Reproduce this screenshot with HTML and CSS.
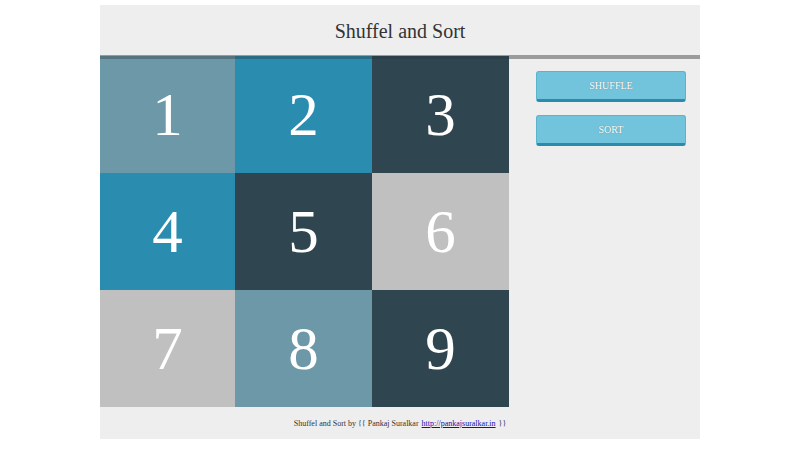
FILE: index.html
```html
<!DOCTYPE html>
<html>
<head>
<meta charset="utf-8">
<link rel="stylesheet" href="styles.css">
</head>
<body>
<div class="app">
  <header class="header">Shuffel and Sort</header>
  <main class="main">
    <div class="grid">
      <div class="cell c-slate">1</div>
      <div class="cell c-teal">2</div>
      <div class="cell c-dark">3</div>
      <div class="cell c-teal">4</div>
      <div class="cell c-dark">5</div>
      <div class="cell c-gray">6</div>
      <div class="cell c-gray">7</div>
      <div class="cell c-slate">8</div>
      <div class="cell c-dark">9</div>
    </div>
    <div class="panel">
      <button class="btn">SHUFFLE</button>
      <button class="btn">SORT</button>
    </div>
  </main>
  <footer class="footer">Shuffel and Sort by {{ Pankaj Suralkar <a href="#">http://pankajsuralkar.in</a> }}</footer>
</div>
</body>
</html>
```
FILE: styles.css
```css
html, body {
  margin: 0;
  padding: 0;
  background: #ffffff;
  font-family: "Liberation Serif", "Times New Roman", serif;
}
.app {
  width: 600px;
  margin: 5px auto 0;
  background: #eeeeee;
}
.header {
  height: 50px;
  display: flex;
  align-items: center;
  justify-content: center;
  font-size: 20px;
  color: #333333;
  padding-top: 2px;
  box-sizing: border-box;
}
.main {
  display: flex;
  border-top: 4px solid #9b9b9b;
}
.grid {
  width: 409px;
  margin-top: -3px;
  display: grid;
  grid-template-columns: 135px 137px 137px;
  grid-template-rows: repeat(3, 117px);
}
.cell {
  display: flex;
  align-items: center;
  justify-content: center;
  color: #ffffff;
  font-size: 61px;
}
.c-slate { background: #6d98a8; }
.c-teal { background: #2a8cae; }
.c-dark { background: #2f4650; }
.c-gray { background: #c0c0c0; }
.grid .cell:nth-child(-n+3) {
  box-shadow: inset 0 3px 0 rgba(40, 50, 55, 0.35);
}
.panel {
  flex: 1;
  display: flex;
  flex-direction: column;
  gap: 13px;
  padding: 12px 0 0 27px;
}
.btn {
  width: 150px;
  height: 31px;
  background: #72c3dc;
  border: 1px solid #5eb3cc;
  border-bottom: 3px solid #2a8cad;
  border-radius: 3px;
  color: #ffffff;
  font-family: "Liberation Serif", "Times New Roman", serif;
  font-size: 10px;
  text-shadow: 0 0 1px rgba(0, 0, 0, 0.35);
  padding: 0;
  cursor: pointer;
}
.footer {
  height: 32px;
  display: flex;
  align-items: center;
  justify-content: center;
  font-size: 8px;
  color: #333333;
}
.footer a {
  color: #1a0dab;
  margin: 0 3px;
}
```
